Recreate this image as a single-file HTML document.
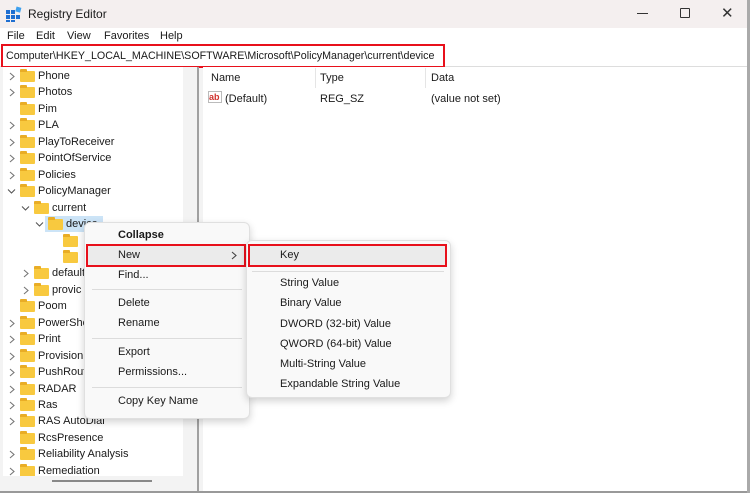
<!DOCTYPE html>
<html><head><meta charset="utf-8"><style>
*{margin:0;padding:0;box-sizing:border-box}
body{width:750px;height:493px;overflow:hidden;background:#f3f3f3;font-family:"Liberation Sans",sans-serif;font-size:11px;color:#1a1a1a;position:relative}
.a{position:absolute;white-space:nowrap}
.title{left:0;top:0;width:750px;height:28px;background:#f4efef}
.menu{left:0;top:28px;width:750px;height:17px;background:#fff}
.addr{left:0;top:45px;width:750px;height:22px;background:#fff;border-bottom:1px solid #ddd}
.red{position:absolute;border:2.5px solid #e8101b}
.left{left:3px;top:67px;width:180px;height:409px;background:#fff;overflow:hidden}
.right{left:203px;top:67px;width:544px;height:424px;background:#fff}
.fold{position:absolute;width:15px;height:11px;background:#f8c93f;border-radius:1px}
.fold:before{content:"";position:absolute;left:0;top:-2px;width:7px;height:3px;background:#e9ad26;border-radius:1px 1px 0 0}
.cm{background:#f9f9f9;border:1px solid #e0e0e0;border-radius:6px;box-shadow:0 3px 8px rgba(0,0,0,.18)}
.sep{position:absolute;height:1px;background:#dcdcdc}
</style></head><body>
<div class="a title"></div>
<svg class="a" style="left:6px;top:6px" width="16" height="16"><g fill="#1f6fd1"><rect x="0" y="4" width="4" height="4"/><rect x="5" y="4" width="4" height="4"/><rect x="0" y="9" width="4" height="4"/><rect x="5" y="9" width="4" height="4"/><rect x="10" y="9" width="4" height="4"/><rect x="0" y="14" width="4" height="2"/><rect x="5" y="14" width="4" height="2"/></g><rect x="10" y="1" width="5" height="5" fill="#3fa0ee" transform="rotate(15 12 3)"/></svg>
<div class="a" style="left:28px;top:7px;font-size:12px">Registry Editor</div>
<div class="a" style="left:637px;top:13px;width:11px;height:1px;background:#333"></div>
<div class="a" style="left:680px;top:8px;width:10px;height:10px;border:1px solid #333;border-radius:1px"></div>
<div class="a" style="left:721px;top:4px;font-size:15px;color:#333">✕</div>
<div class="a menu"></div>
<div class="a" style="left:7px;top:30px">File</div>
<div class="a" style="left:36px;top:30px">Edit</div>
<div class="a" style="left:67px;top:30px">View</div>
<div class="a" style="left:104px;top:30px">Favorites</div>
<div class="a" style="left:160px;top:30px">Help</div>
<div class="a addr"></div>
<div class="a" style="left:6px;top:50px;font-size:10.7px">Computer\HKEY_LOCAL_MACHINE\SOFTWARE\Microsoft\PolicyManager\current\device</div>
<div class="red" style="left:1px;top:44px;width:444px;height:24px"></div>
<div class="a left">
<div class="a" style="left:42px;top:149px;width:58px;height:16px;background:#cce4f7"></div>
</div>
<div class="a" style="left:197px;top:67px;width:2px;height:424px;background:#a0a0a0"></div>
<div class="a right"></div>
<div class="a" style="left:0;top:491px;width:750px;height:2px;background:#999"></div>
<div class="a" style="left:747px;top:0;width:3px;height:493px;background:#aaa"></div>
<div class="a" style="left:211px;top:72px">Name</div>
<div class="a" style="left:320px;top:72px">Type</div>
<div class="a" style="left:431px;top:72px">Data</div>
<div class="a" style="left:315px;top:68px;width:1px;height:20px;background:#e5e5e5"></div>
<div class="a" style="left:425px;top:68px;width:1px;height:20px;background:#e5e5e5"></div>
<div class="a" style="left:208px;top:91px;width:14px;height:12px;border:1px solid #bbb;font-size:9px;color:#d0312d;font-weight:bold;line-height:10px">ab</div>
<div class="a" style="left:225px;top:93px">(Default)</div>
<div class="a" style="left:320px;top:93px">REG_SZ</div>
<div class="a" style="left:431px;top:93px">(value not set)</div>

<div id="tree"></div>
<script>
var rows=[["Phone",0,1],["Photos",0,1],["Pim",0,0],["PLA",0,1],["PlayToReceiver",0,1],["PointOfService",0,1],["Policies",0,1],["PolicyManager",0,2],["current",1,2],["device",2,2],["",3,0],["",3,0],["default",1,1],["provic",1,1],["Poom",0,0],["PowerShe",0,1],["Print",0,1],["Provision",0,1],["PushRout",0,1],["RADAR",0,1],["Ras",0,1],["RAS AutoDial",0,1],["RcsPresence",0,0],["Reliability Analysis",0,1],["Remediation",0,1]];
var h="";
rows.forEach(function(r,i){var y=Math.round(76+i*16.45);var ind=r[1]*14;
if(y>482)return;
if(r[2]==1)h+='<svg class="a" style="left:'+(8+ind)+'px;top:'+(y-4)+'px" width="8" height="9"><path d="M2 1L6 4.5L2 8" fill="none" stroke="#777" stroke-width="1.1"/></svg>';
if(r[2]==2)h+='<svg class="a" style="left:'+(7+ind)+'px;top:'+(y-3)+'px" width="9" height="7"><path d="M1 1.5L4.5 5L8 1.5" fill="none" stroke="#555" stroke-width="1.1"/></svg>';
var fl=r[1]<3?20+ind:63;
h+='<div class="fold" style="left:'+fl+'px;top:'+(y-5)+'px"></div>';
if(r[0])h+='<div class="a" style="left:'+(38+ind)+'px;top:'+(y-6)+'px">'+r[0]+'</div>';});
document.getElementById('tree').innerHTML=h;
</script>
<div class="a" style="left:0;top:476px;width:197px;height:15px;background:#f3f3f3"></div>
<div class="a" style="left:0;top:67px;width:3px;height:424px;background:#f3f3f3"></div>
<div class="a" style="left:183px;top:67px;width:14px;height:424px;background:#f3f3f3"></div>
<div class="a" style="left:52px;top:480px;width:100px;height:2px;background:#888"></div>

<div class="a cm" style="left:84px;top:222px;width:166px;height:197px"></div>
<div class="a" style="left:88px;top:246px;width:157px;height:19px;background:#ebebeb"></div>
<div class="a" style="left:118px;top:229px;font-weight:bold">Collapse</div>
<div class="a" style="left:118px;top:249px">New</div>
<svg class="a" style="left:230px;top:251px" width="8" height="9"><path d="M2 1L6 4.5L2 8" fill="none" stroke="#444" stroke-width="1.1"/></svg>
<div class="red" style="left:86px;top:244px;width:160px;height:23px"></div>
<div class="a" style="left:118px;top:269px">Find...</div>
<div class="sep" style="left:92px;top:289px;width:150px"></div>
<div class="a" style="left:118px;top:297px">Delete</div>
<div class="a" style="left:118px;top:317px">Rename</div>
<div class="sep" style="left:92px;top:338px;width:150px"></div>
<div class="a" style="left:118px;top:346px">Export</div>
<div class="a" style="left:118px;top:366px">Permissions...</div>
<div class="sep" style="left:92px;top:387px;width:150px"></div>
<div class="a" style="left:118px;top:395px">Copy Key Name</div>

<div class="a cm" style="left:246px;top:240px;width:205px;height:158px"></div>
<div class="a" style="left:250px;top:246px;width:195px;height:19px;background:#ebebeb"></div>
<div class="red" style="left:248px;top:244px;width:199px;height:23px"></div>
<div class="a" style="left:280px;top:249px">Key</div>
<div class="sep" style="left:252px;top:271px;width:192px"></div>
<div class="a" style="left:280px;top:277px">String Value</div>
<div class="a" style="left:280px;top:297px">Binary Value</div>
<div class="a" style="left:280px;top:318px">DWORD (32-bit) Value</div>
<div class="a" style="left:280px;top:338px">QWORD (64-bit) Value</div>
<div class="a" style="left:280px;top:358px">Multi-String Value</div>
<div class="a" style="left:280px;top:378px">Expandable String Value</div>
</body></html>
